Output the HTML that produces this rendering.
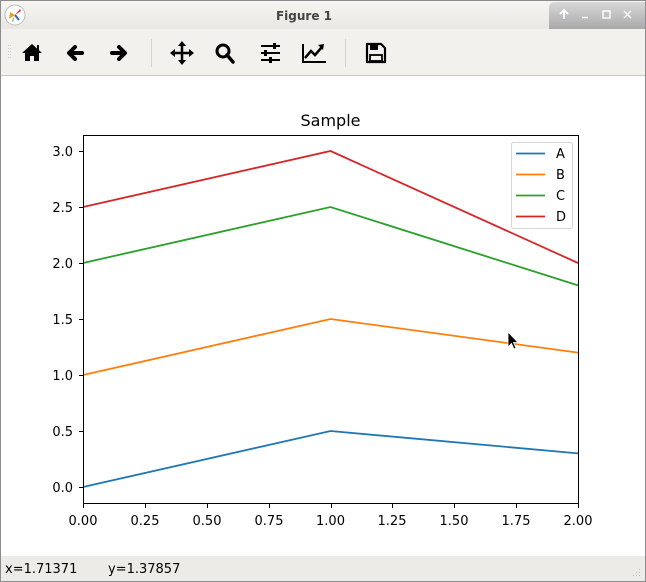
<!DOCTYPE html>
<html><head><meta charset="utf-8"><style>
body{margin:0;width:646px;height:582px;overflow:hidden;background:#fff;font-family:"DejaVu Sans","Liberation Sans",sans-serif}
</style></head><body>
<svg width="646" height="582" xmlns="http://www.w3.org/2000/svg" style="position:absolute;left:0;top:0">
<defs><linearGradient id="tb" x1="0" y1="0" x2="0" y2="1"><stop offset="0" stop-color="#f6f5f3"/><stop offset="1" stop-color="#e9e7e3"/></linearGradient>
<linearGradient id="bt" x1="0" y1="0" x2="0" y2="1"><stop offset="0" stop-color="#d8d8d8"/><stop offset="1" stop-color="#a9a9a9"/></linearGradient></defs>
<rect x="0" y="0" width="646" height="582" fill="#f3f1ee"/>
<rect x="0.5" y="0.5" width="645" height="581" fill="none" stroke="#8c8c8c"/>
<rect x="1" y="1" width="644" height="28" fill="url(#tb)"/>
<path d="M549 29 L549 8 Q549 2 555 2 L645 2 L645 29 Z" fill="url(#bt)"/>
<circle cx="15" cy="15" r="10" fill="#fff" stroke="#bbb"/>
<path d="M10 12 L15 15 L9 19 Z" fill="#e8a21c"/><path d="M15 15 L20 9 L21 11 Z" fill="#d33"/><path d="M15 15 L13 22 L12 21Z" fill="#5a5"/><path d="M15 15 L19 20 Z" stroke="#36c" stroke-width="2"/>
<text x="304" y="20" font-size="12" font-weight="bold" fill="#444" text-anchor="middle">Figure 1</text>
<g fill="#fff" stroke="#fff" stroke-width="1.4">
<path d="M564 19 V11 M560 14 L564 10 L568 14" fill="none" stroke-width="1.8"/>
<path d="M582 17.5 H588"/>
<rect x="603" y="11" width="7" height="7" fill="none"/>
<path d="M624 11 L631 18 M631 11 L624 18"/>
</g>
<line x1="1" y1="75.5" x2="645" y2="75.5" stroke="#c9c5bf"/>
<g fill="#ccc"><rect x="8" y="45" width="1" height="1"/><rect x="8" y="48" width="1" height="1"/><rect x="8" y="51" width="1" height="1"/><rect x="8" y="54" width="1" height="1"/><rect x="8" y="57" width="1" height="1"/><rect x="10" y="45" width="1" height="1"/><rect x="10" y="48" width="1" height="1"/><rect x="10" y="51" width="1" height="1"/><rect x="10" y="54" width="1" height="1"/><rect x="10" y="57" width="1" height="1"/></g>
<line x1="151.5" y1="39" x2="151.5" y2="67" stroke="#d6d2cc"/>
<line x1="345.5" y1="39" x2="345.5" y2="67" stroke="#d6d2cc"/>
<g fill="#000" stroke="#000">
<path d="M22 53 L32 44 L42 53 L39 53 L39 61 L34 61 L34 56 L30 56 L30 61 L25 61 L25 53Z" stroke="none"/><rect x="37" y="45" width="2" height="5" stroke="none"/>
<path d="M82 53 H70 M75 47 L69 53 L75 59" fill="none" stroke-width="4" stroke-linecap="round" stroke-linejoin="round"/>
<path d="M112 53 H124 M119 47 L125 53 L119 59" fill="none" stroke-width="4" stroke-linecap="round" stroke-linejoin="round"/>
<path d="M182 43 V63 M172 53 H192" stroke-width="2.5" fill="none"/>
<path d="M182 41 L178 46 H186Z M182 65 L178 60 H186Z M170 53 L175 49 V57Z M194 53 L189 49 V57Z" stroke="none"/>
<circle cx="223" cy="51" r="6" fill="none" stroke-width="3"/><path d="M227 55 L233 62" stroke-width="3.5" stroke-linecap="round"/>
<path d="M261 46 H280 M261 53 H280 M261 60 H280" stroke-width="2"/>
<rect x="273" y="43" width="3" height="6" stroke="none"/><rect x="264" y="50" width="3" height="6" stroke="none"/><rect x="269" y="57" width="3" height="6" stroke="none"/>
<path d="M303 44 V62 H326" fill="none" stroke-width="2"/>
<path d="M305 58 L311 51 L315 55 L322 47" fill="none" stroke-width="2.5"/><path d="M318 45 L324 44 L323 50Z" stroke="none"/>
<path d="M367 44 H381 L385 48 V62 H367Z" fill="none" stroke-width="2.2" stroke-linejoin="round"/>
<rect x="370" y="45" width="8" height="5" stroke="none"/><rect x="370" y="55" width="12" height="6" fill="none" stroke-width="1.8"/>
</g>
<rect x="1" y="76" width="644" height="480" fill="#fff"/>
<text x="330.5" y="126" font-size="16" text-anchor="middle" fill="#000">Sample</text>
<g stroke-width="1.8" fill="none">
<polyline points="83,487 330.5,431 578,453.4" stroke="#1f77b4"/>
<polyline points="83,375 330.5,319 578,352.6" stroke="#ff7f0e"/>
<polyline points="83,263 330.5,207 578,285.4" stroke="#2ca02c"/>
<polyline points="83,207 330.5,151 578,263" stroke="#d62728"/>
</g>
<rect x="83.5" y="135.5" width="495" height="368" fill="none" stroke="#000" stroke-width="1"/>
<g stroke="#000">
<path d="M79 487.5H83 M79 431.5H83 M79 375.5H83 M79 319.5H83 M79 263.5H83 M79 207.5H83 M79 151.5H83"/>
<path d="M83.5 504V508 M145.5 504V508 M207.5 504V508 M269.5 504V508 M331.5 504V508 M392.5 504V508 M454.5 504V508 M516.5 504V508 M578.5 504V508"/>
</g>
<g font-size="13" fill="#000" text-anchor="end">
<text x="73" y="492">0.0</text><text x="73" y="436">0.5</text><text x="73" y="380">1.0</text><text x="73" y="324">1.5</text><text x="73" y="268">2.0</text><text x="73" y="212">2.5</text><text x="73" y="156">3.0</text>
</g>
<g font-size="13" fill="#000" text-anchor="middle">
<text x="83" y="525">0.00</text><text x="145" y="525">0.25</text><text x="207" y="525">0.50</text><text x="269" y="525">0.75</text><text x="330.5" y="525">1.00</text><text x="392" y="525">1.25</text><text x="454" y="525">1.50</text><text x="516" y="525">1.75</text><text x="578" y="525">2.00</text>
</g>
<rect x="511.5" y="142.5" width="61" height="86" rx="2" fill="#fff" fill-opacity="0.8" stroke="#d6d6d6"/>
<g stroke-width="1.8"><path d="M516 153.5H545" stroke="#1f77b4"/><path d="M516 174.5H545" stroke="#ff7f0e"/><path d="M516 195.5H545" stroke="#2ca02c"/><path d="M516 216.5H545" stroke="#d62728"/></g>
<g font-size="13" fill="#000"><text x="556" y="158">A</text><text x="556" y="179">B</text><text x="556" y="200">C</text><text x="556" y="221">D</text></g>
<path d="M508 332 L508 347 L511.5 343.5 L514 349 L516 348 L513.5 342.5 L518 342.5Z" fill="#000" stroke="#fff" stroke-width="0.8"/>
<rect x="1" y="556" width="644" height="25" fill="#edebe7"/>
<text x="5" y="573" font-size="13" fill="#000">x=1.71371</text><text x="108" y="573" font-size="13" fill="#000">y=1.37857</text>
<g fill="#bbb"><rect x="639" y="575" width="1" height="1"/><rect x="636" y="575" width="1" height="1"/><rect x="633" y="575" width="1" height="1"/><rect x="639" y="572" width="1" height="1"/><rect x="636" y="572" width="1" height="1"/><rect x="639" y="569" width="1" height="1"/></g>
</svg>
</body></html>
